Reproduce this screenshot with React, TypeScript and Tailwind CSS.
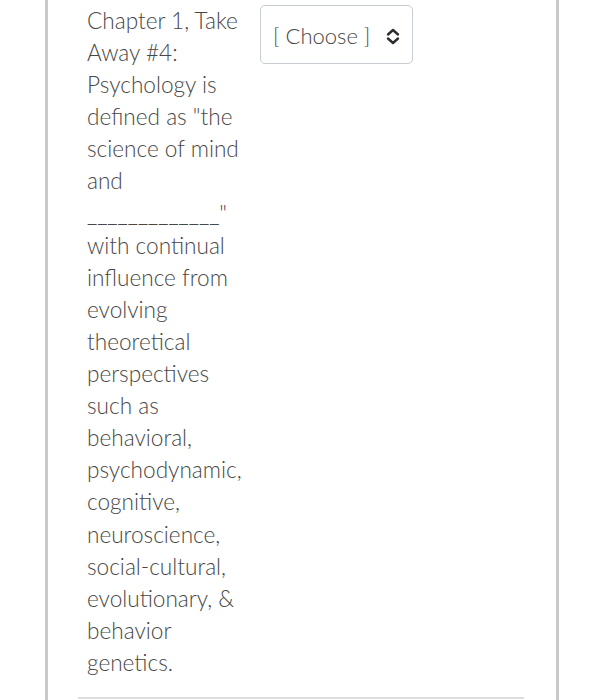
import React from "react";

export default function App() {
  return (
    <div className="w-[604px] h-[700px] bg-white overflow-hidden" style={{ fontFamily: "Lato, 'Noto Sans', sans-serif" }}>
      <div className="ml-[45px] w-[514px] h-[700px] border-x-[3px] border-[#c9c9c9] pl-[30px] pr-[32px] pt-[5px] flex flex-col">
        <div className="flex items-start pl-[9px]">
          <div className="w-[162px] text-[22.6px] leading-[32.1px] font-light text-[#474747]">
            Chapter 1, Take Away #4: Psychology is defined as "the science of mind and _____________" with continual influence from evolving theoretical perspectives such as behavioral, psychodynamic, cognitive, neuroscience, social-cultural, evolutionary, &amp; behavior genetics.
          </div>
          <div className="ml-[11px] w-[153px] h-[59px] border border-[#c7cdd1] rounded-[5px] flex items-center pl-[12px] pr-[12px] pt-[3px] justify-between">
            <span className="text-[22px] font-light text-[#474747] leading-none">[ Choose ]</span>
            <svg width="14" height="17" viewBox="0 0 14 17" fill="none" stroke="#2d2d2d" strokeWidth="2.4" strokeLinecap="round" strokeLinejoin="round">
              <path d="M2 6.5 L7 2 L12 6.5" />
              <path d="M2 10.5 L7 15 L12 10.5" />
            </svg>
          </div>
        </div>
        <div className="mt-auto mb-[1px] h-[2px] bg-[#dddddd]" />
      </div>
    </div>
  );
}
